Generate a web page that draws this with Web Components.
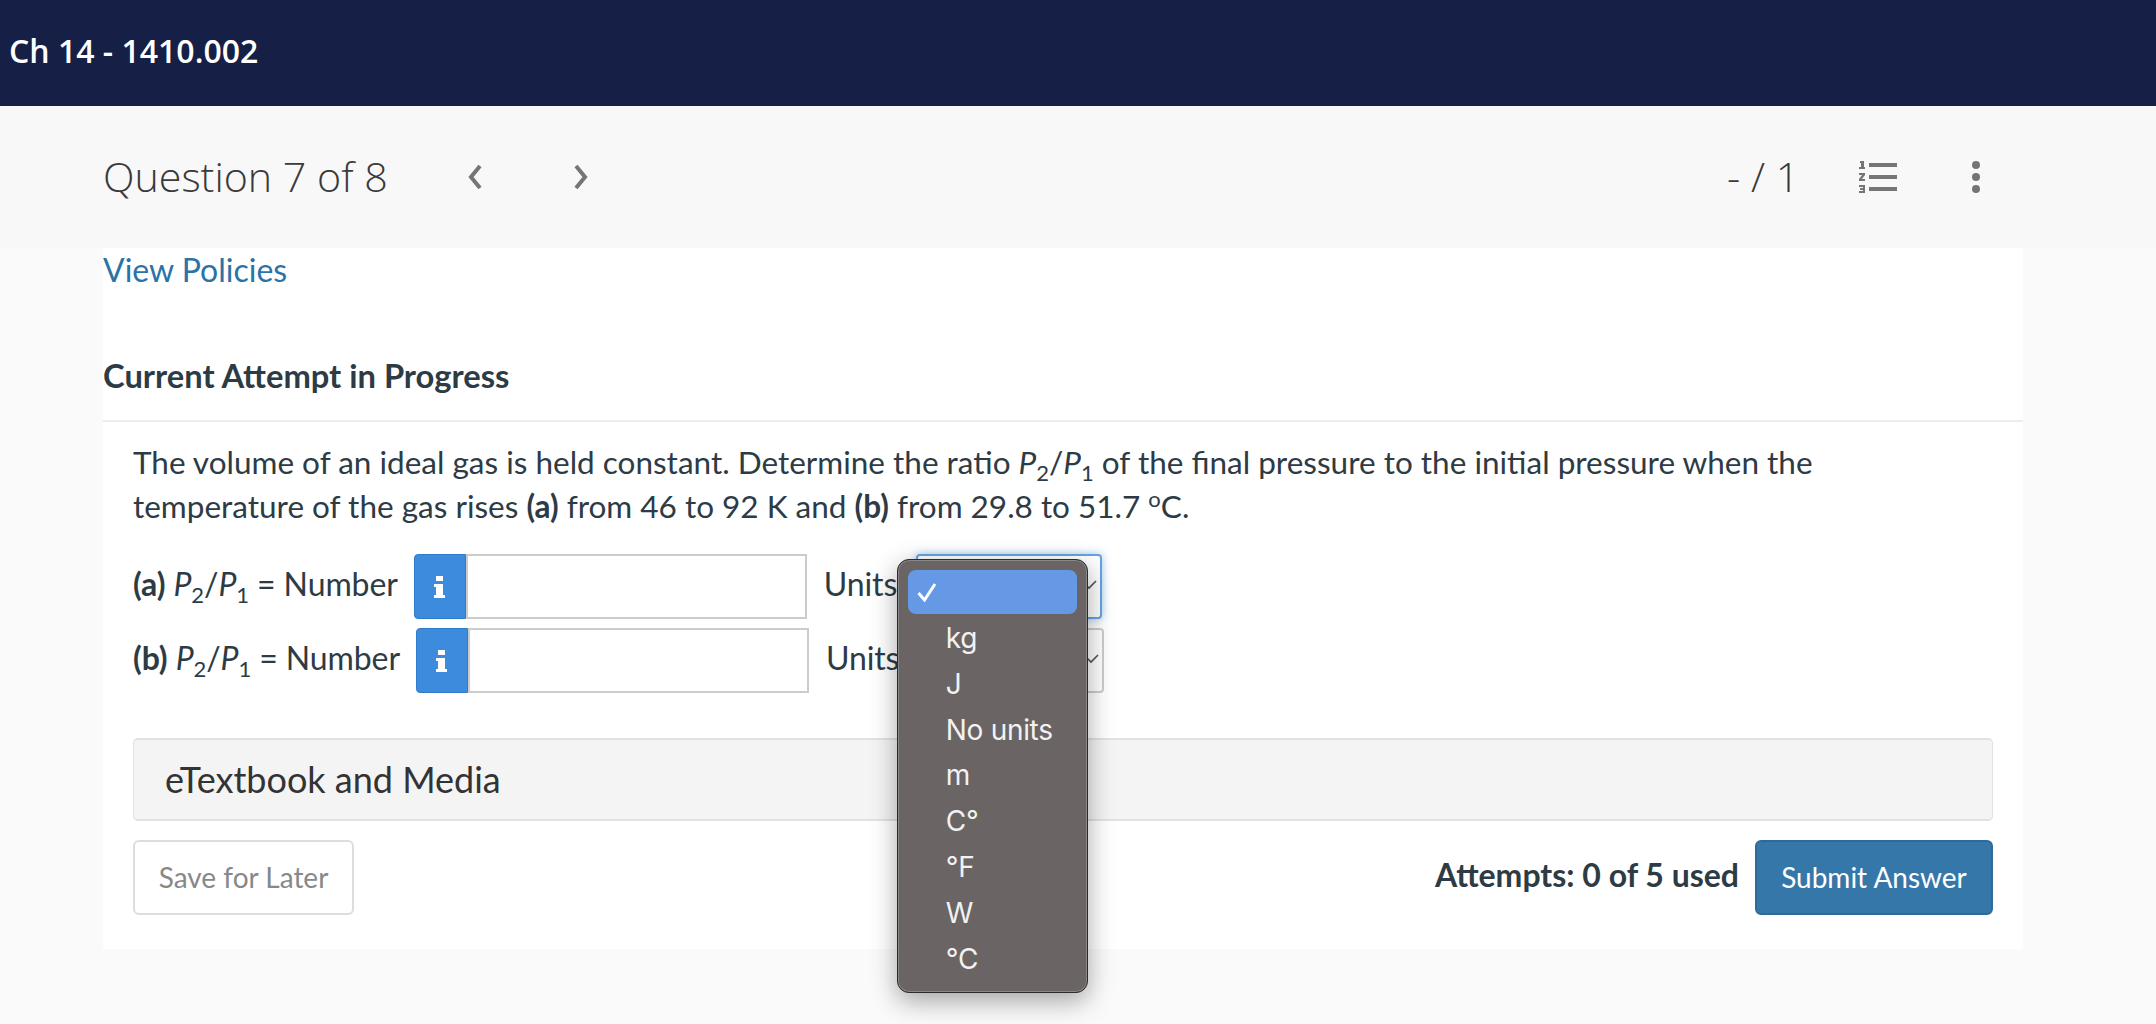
<!DOCTYPE html>
<html>
<head>
<meta charset="utf-8">
<title>Ch 14 - 1410.002</title>
<style>
  html, body { margin: 0; padding: 0; }
  body { background: #fafafa; font-family: "Lato", "Liberation Sans", sans-serif; color: #2d3b45; width: 2156px; height: 1024px; overflow: hidden; }
</style>
</head>
<body>
<app-header>Ch 14 - 1410.002</app-header>
<question-bar></question-bar>
<question-card>
  <answer-row tag="(a)" slot="rows"><units-select open></units-select></answer-row>
  <answer-row tag="(b)" slot="rows"><units-select></units-select></answer-row>
</question-card>

<script>
class AppHeader extends HTMLElement {
    constructor() {
        super();
        this.attachShadow({mode: 'open'}).innerHTML = `
            <style>
                :host { display: flex; align-items: center; height: 106px; box-sizing: border-box; padding: 0 0 6px 9px; background: #162046; color: #fff; font: 600 32px "Open Sans", sans-serif; }
            </style>
            <slot></slot>`;
    }
}

class QuestionBar extends HTMLElement {
    constructor() {
        super();
        this.attachShadow({mode: 'open'}).innerHTML = `
            <style>
                :host { display: flex; align-items: center; height: 142px; box-sizing: border-box; padding: 0 0 2px 103px; background: #f8f8f8; color: #3a3a3a; font: 300 41.2px "Open Sans", sans-serif; }
                .title { width: 364px; }
                svg { display: block; margin-top: 2px; }
                .next { margin-left: 90px; }
                .score { margin-left: 1138px; width: 132px; }
                .dots { margin-left: 75px; }
            </style>
            <span class="title">Question 7 of 8</span>
            <svg width="16" height="26" viewBox="0 0 16 26"><path d="M13 2 4 13l9 11" fill="none" stroke="#757575" stroke-width="4"/></svg>
            <svg class="next" width="16" height="26" viewBox="0 0 16 26"><path d="M3 2l9 11-9 11" fill="none" stroke="#757575" stroke-width="4"/></svg>
            <span class="score">- / 1</span>
            <svg width="38" height="32" viewBox="0 0 38 32" fill="#757575">
                <rect x="10" y="2" width="28" height="4"/><rect x="10" y="14" width="28" height="4"/><rect x="10" y="26" width="28" height="4"/>
                <path d="M1 0h4v6h1v2H0V6h2V2H1zM0 12h6v2L3 18h3v2H0v-2l3-4H0zM0 24h6v8H0v-2h4v-1H1v-2h3v-1H0z"/>
            </svg>
            <svg class="dots" width="8" height="32" viewBox="0 0 8 32" fill="#757575"><circle cx="4" cy="4" r="4"/><circle cx="4" cy="16" r="4"/><circle cx="4" cy="28" r="4"/></svg>`;
    }
}

class QuestionCard extends HTMLElement {
    constructor() {
        super();
        this.attachShadow({mode: 'open'}).innerHTML = `
            <style>
                :host { display: block; box-sizing: border-box; width: 1920px; height: 701px; margin-left: 103px; background: #fff; }
                a { display: block; color: #2a73a8; font-size: 32px; line-height: 44px; }
                h2 { margin: 64px 0 0; height: 66px; box-sizing: border-box; font-size: 32.7px; line-height: 40px; font-weight: 700; border-bottom: 2px solid #ededed; color: #2d3b45; }
                .body { padding: 0 30px; }
                p { margin: 18px 0 0; font-size: 31.5px; line-height: 44px; }
                .line { display: block; white-space: nowrap; }
                i { font-style: italic; }
                sub, sup { font-size: 22px; line-height: 0; }
                .rows { margin-top: 26px; display: flex; flex-direction: column; gap: 9px; }
                .media { margin-top: 45px; height: 83px; box-sizing: border-box; padding: 0 0 2px 31px; display: flex; align-items: center; background: #f4f4f4; border: 1px solid #e2e2e2; border-top-width: 2px; border-bottom-width: 2px; border-radius: 5px; font-size: 36px; color: #333; }
                .actions { margin-top: 19px; display: flex; align-items: center; }
                .attempts { margin-left: auto; font-size: 32px; font-weight: 700; padding-bottom: 6px; }
                button { font: 400 28px "Lato", sans-serif; height: 75px; border-radius: 6px; box-sizing: border-box; padding-bottom: 3px; }
                .save { width: 221px; background: #fff; border: 2px solid #ddd; color: #888; }
                .submit { width: 238px; margin-left: 16px; background: #3677a9; border: 2px solid #2e6a99; color: #fff; }
            </style>
            <a>View Policies</a>
            <h2>Current Attempt in Progress</h2>
            <div class="body">
                <p>
                    <span class="line">The volume of an ideal gas is held constant. Determine the ratio <i>P</i><sub>2</sub>/<i>P</i><sub>1</sub> of the final pressure to the initial pressure when the</span>
                    <span class="line">temperature of the gas rises <b>(a)</b> from 46 to 92 K and <b>(b)</b> from 29.8 to 51.7 <sup>o</sup>C.</span>
                </p>
                <div class="rows"><slot name="rows"></slot></div>
                <div class="media">eTextbook and Media</div>
                <div class="actions">
                    <button class="save">Save for Later</button>
                    <span class="attempts">Attempts: 0 of 5 used</span>
                    <button class="submit">Submit Answer</button>
                </div>
            </div>`;
    }
}

class AnswerRow extends HTMLElement {
    constructor() {
        super();
        const tag = this.getAttribute('tag');
        this.attachShadow({mode: 'open'}).innerHTML = `
            <style>
                :host { display: flex; align-items: center; height: 65px; font-size: 32px; letter-spacing: -0.1px; }
                .label { margin-right: 16px; padding-bottom: 6px; white-space: nowrap; }
                i { font-style: italic; }
                sub { font-size: 22px; line-height: 0; }
                .info { width: 52px; height: 65px; box-sizing: border-box; background: #3c8bdd; border: 1px solid #2f7cc9; border-radius: 4px 0 0 4px; display: flex; align-items: center; justify-content: center; }
                .input { width: 341px; height: 65px; box-sizing: border-box; background: #fff; border: 2px solid #ccc; }
                .units { margin-left: 17px; width: 92px; padding-bottom: 6px; }
            </style>
            <span class="label"><b>${tag}</b> <i>P</i><sub>2</sub>/<i>P</i><sub>1</sub> = Number</span>
            <div class="info"><svg width="11" height="22" viewBox="0 0 11 22" fill="#fff"><rect x="2" width="7" height="5"/><path d="M0 8h9v11h2v3H0v-3h2v-8H0z"/></svg></div>
            <div class="input"></div>
            <span class="units">Units</span>
            <slot></slot>`;
    }
}

class UnitsSelect extends HTMLElement {
    constructor() {
        super();
        const items = ['kg', 'J', 'No units', 'm', 'C°', '°F', 'W', '°C'];
        this.attachShadow({mode: 'open'}).innerHTML = `
            <style>
                :host { display: block; position: relative; width: 186px; height: 65px; box-sizing: border-box; background: #fff; border: 2px solid #ccc; border-radius: 4px; }
                :host([open]) { border-color: #66a3e0; box-shadow: 0 0 8px rgba(102,163,224,.6); }
                svg.arrow { position: absolute; right: 3px; top: 24px; }
                .popup { position: absolute; left: -21px; top: 3px; width: 191px; height: 434px; box-sizing: border-box; padding: 10px 10px; background: #6a6564; border: 1px solid #2b2b2b; border-radius: 12px; box-shadow: inset 0 0 0 1px #8a8685, 0 8px 26px rgba(0,0,0,.35); font: 400 28px "Inter", sans-serif; color: #f2f2f2; z-index: 5; }
                .current { height: 44px; background: #6699e5; border-radius: 8px; display: flex; align-items: center; padding-left: 9px; }
                .item { height: 45.8px; line-height: 45.8px; padding-left: 38px; letter-spacing: -0.3px; }
                .items { margin-top: 2px; }
            </style>
            <svg class="arrow" width="16" height="10" viewBox="0 0 16 10"><path d="M1 1l7 7 7-7" fill="none" stroke="#555" stroke-width="1.6"/></svg>
            ${this.hasAttribute('open') ? `
            <div class="popup">
                <div class="current"><svg width="20" height="20" viewBox="0 0 20 20"><path d="M1.5 11l6 7L18 2" fill="none" stroke="#fff" stroke-width="3"/></svg></div>
                <div class="items">${items.map(t => `<div class="item">${t}</div>`).join('')}</div>
            </div>` : ''}`;
    }
}

window.customElements.define('app-header', AppHeader);
window.customElements.define('question-bar', QuestionBar);
window.customElements.define('question-card', QuestionCard);
window.customElements.define('answer-row', AnswerRow);
window.customElements.define('units-select', UnitsSelect);
</script>
</body>
</html>
